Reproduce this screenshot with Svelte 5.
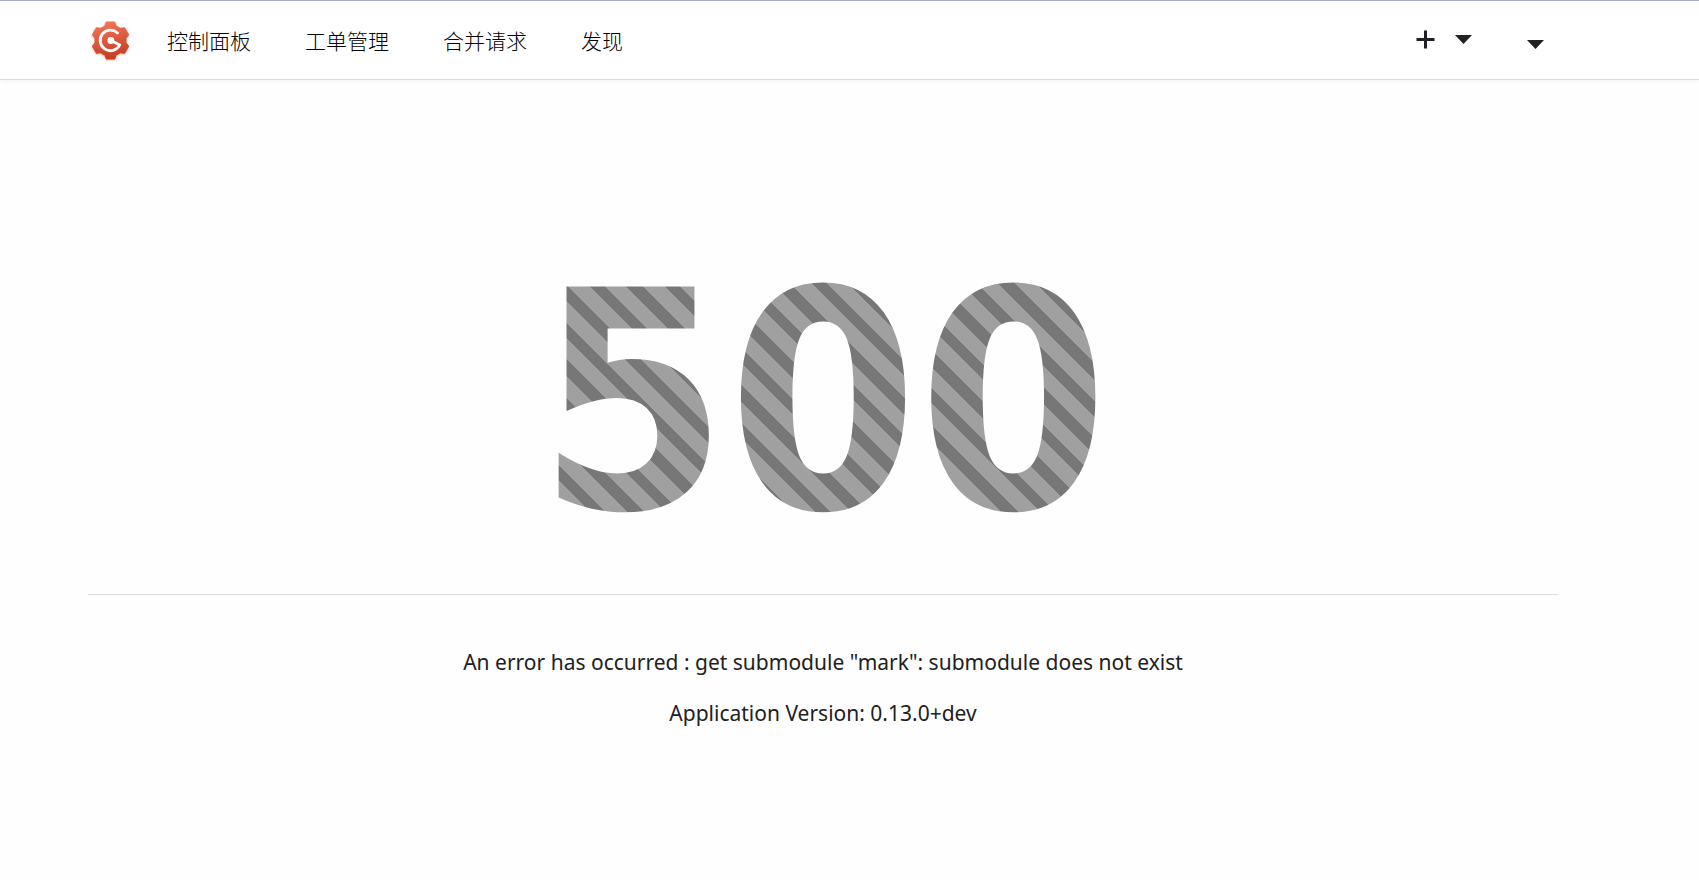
<script>
  const links = ['控制面板', '工单管理', '合并请求', '发现'];
  const teeth = [0, 60, 120, 180, 240, 300];
</script>

<header>
  <div class="container bar">
    <a class="logo" href="#home" aria-label="Gogs">
      <svg width="40" height="44" viewBox="0 -1 40 44" aria-hidden="true">
        <defs>
          <linearGradient id="gear" gradientUnits="userSpaceOnUse" x1="14" y1="2" x2="22" y2="41">
            <stop offset="0" stop-color="#f6765a" />
            <stop offset="1" stop-color="#c03c20" />
          </linearGradient>
          <filter id="soft" x="-20%" y="-20%" width="140%" height="140%">
            <feDropShadow dx="0" dy="1" stdDeviation="0.8" flood-color="#c03c20" flood-opacity="0.35" />
          </filter>
          <clipPath id="shape">
            <circle cx="20.500" cy="21.500" r="16" />
            {#each teeth as angle}
              <path d="M13.500 9 L15.800 3 Q16 2.400 16.700 2.400 H24.300 Q25 2.400 25.200 3 L27.500 9 Z" transform="rotate({angle} 20.500 21.500)" />
            {/each}
          </clipPath>
        </defs>
        <g filter="url(#soft)">
          <rect width="42" height="44" fill="url(#gear)" clip-path="url(#shape)" />
        </g>
        <path d="M27.500 13.900 A10.300 10.300 0 1 0 29.700 26 L20.800 21.500" fill="none" stroke="#fff" stroke-width="2.800" stroke-linecap="round" stroke-linejoin="round" />
        <circle cx="20.800" cy="21.500" r="3.400" fill="#fff" />
      </svg>
    </a>
    <nav>
      {#each links as link}
        <a href="#top">{link}</a>
      {/each}
    </nav>
    <div class="actions">
      <button class="create" aria-label="Create">
        <svg width="19" height="19" viewBox="0 0 19 19" aria-hidden="true">
          <path d="M9.500 0.500V18.500M0.500 9.500H18.500" stroke="#1f1f24" stroke-width="3" />
        </svg>
        <svg width="17" height="9" viewBox="0 0 17 9" aria-hidden="true"><path d="M0 0H17L8.500 9Z" fill="#212121" /></svg>
      </button>
      <button class="user" aria-label="Account">
        <svg width="17" height="9" viewBox="0 0 17 9" aria-hidden="true"><path d="M0 0H17L8.500 9Z" fill="#212121" /></svg>
      </button>
    </div>
  </div>
</header>

<main class="container">
  <h1>500</h1>
  <hr />
  <p>An error has occurred : get submodule "mark": submodule does not exist</p>
  <p>Application Version: 0.13.0+dev</p>
</main>

<style>
  :global(body) {
    background: #fefefe;
    color: #212121;
    font-family: "Noto Sans", "Noto Sans CJK SC", sans-serif;
  }
  .container {
    margin: 0 141px 0 88px;
  }
  header {
    background: #fff;
    border-top: 1px solid #a3aecb;
    border-bottom: 1px solid #dbdbdb;
    box-shadow: 0 2px 4px rgba(0, 0, 0, 0.04);
  }
  .bar {
    display: flex;
    align-items: center;
    height: 78px;
  }
  .logo {
    display: flex;
    margin-left: 2px;
  }
  nav {
    display: flex;
    gap: 54px;
    margin-left: 37px;
  }
  nav a {
    color: #000;
    text-decoration: none;
    font: 300 21px/32px "Noto Sans CJK SC", sans-serif;
  }
  .actions {
    display: flex;
    align-items: center;
    gap: 55px;
    margin-left: auto;
    padding-right: 14px;
  }
  button {
    display: flex;
    align-items: center;
    gap: 20px;
    padding: 0;
    border: 0;
    background: none;
  }
  .create {
    padding-bottom: 2px;
  }
  .user {
    padding-top: 8px;
  }
  main {
    text-align: center;
  }
  h1 {
    width: max-content;
    margin: 132px auto 0;
    font: 700 304px/382px "DejaVu Sans Condensed", "DejaVu Sans", sans-serif;
    color: transparent;
    background: repeating-linear-gradient(45deg, #a0a0a0 0 15px, #777 15px 27px, #a0a0a0 27px 42px, #777 42px 53px);
    background-clip: text;
    -webkit-background-clip: text;
  }
  hr {
    margin: 0;
    border: 0;
    border-top: 1px solid #dbdbdb;
  }
  p {
    margin: 0;
    font-size: 21px;
    line-height: 31px;
  }
  hr + p {
    margin: 52px 0 20px;
  }
</style>
